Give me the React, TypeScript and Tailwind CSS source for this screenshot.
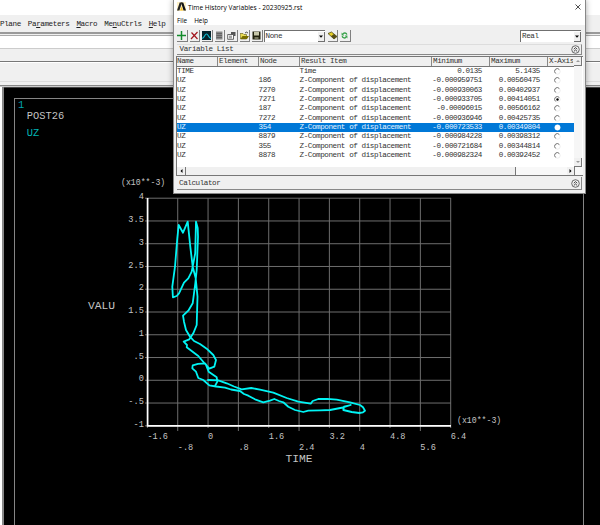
import { ReactNode } from "react";

const rows = [
  { name: "TIME", node: "", item: "Time", min: "0.0135", max: "5.1435" },
  { name: "UZ", node: "186", item: "Z-Component of displacement", min: "-0.000959751", max: "0.00560475" },
  { name: "UZ", node: "7270", item: "Z-Component of displacement", min: "-0.000930063", max: "0.00402937" },
  { name: "UZ", node: "7271", item: "Z-Component of displacement", min: "-0.000933705", max: "0.00414051" },
  { name: "UZ", node: "187", item: "Z-Component of displacement", min: "-0.00096015", max: "0.00566162" },
  { name: "UZ", node: "7272", item: "Z-Component of displacement", min: "-0.000936946", max: "0.00425735" },
  { name: "UZ", node: "354", item: "Z-Component of displacement", min: "-0.000723533", max: "0.00349804" },
  { name: "UZ", node: "8879", item: "Z-Component of displacement", min: "-0.000984228", max: "0.00398312" },
  { name: "UZ", node: "355", item: "Z-Component of displacement", min: "-0.000721684", max: "0.00344814" },
  { name: "UZ", node: "8878", item: "Z-Component of displacement", min: "-0.000982324", max: "0.00392452" },
];

const selectedRow = 6;
const xAxisRow = 3;

const yLabels = ["4", "3.5", "3", "2.5", "2", "1.5", "1", ".5", "0", "-.5", "-1"];
const xLabels = ["-1.6", "-.8", "0", ".8", "1.6", "2.4", "3.2", "4", "4.8", "5.6", "6.4"];

const curve =
  "M207.3 380 L218.3 380.3 226.7 383.3 234 386.5 241.7 389.3 251.2 388 260 389.7 273.3 392.7 286.7 398 298.3 401.7 310.7 403.7 312.7 401 318.3 399 327 398.8 336.7 399.7 350 402.3 360 405 363 407.3 365 410.7 363 412.3 359.3 413 351.7 412 343.3 410 344 406.7 350.7 405 343 407.5 330 410 320 410.3 308.3 410.7 303.3 412 295 410 288.3 406.7 283.3 402.3 279 401 274.3 399 270 400.7 263.3 402.3 255 399.3 248.3 395.7 244 394 240 391 231 389.5 225 387.7 216 386.5 209.3 385.3 203.3 380 198.3 378 196 371.7 192.3 368.3 192.7 365.3 198 363.8 205 363.3 209.3 368.7 214.3 366.7 216 360 213.3 355 206.7 348.7 200 344 194 341 190 336.7 186 330 184 321.7 183 315.7 188.3 310.7 192.7 303.3 194 293.3 195.3 283.3 196.7 270 198 236.7 197.7 228 196 221.7 195.2 253.3 193.3 263.3 191.7 271.7 188.3 278.3 184 282.7 179 293.3 176.7 296 172.9 297.3 172.3 286.7 175 266.7 177.3 238.3 178.7 225 183 232.7 187.7 221.7 190.3 246.7 192.7 266.7 195.7 278.3 197.5 296.7 196.7 325 193.3 333.3 189.3 339.3 183.7 341.7 187 345 186.7 347.3 198.3 356 206 365 208.7 371.7 216.7 377.3 217.3 381.7 215 386";

function ToolButton({ children }: { children: ReactNode }) {
  return (
    <div className="flex h-[12px] w-[10.5px] items-center justify-center border-r border-b border-[#808080] bg-[#f0f0f0]">
      <svg width="9" height="9" viewBox="0 0 9 9">
        {children}
      </svg>
    </div>
  );
}

function Chevrons() {
  return (
    <svg width="9" height="9" viewBox="0 0 9 9" fill="none" stroke="#333" strokeWidth="0.7">
      <circle cx="4.5" cy="4.5" r="3.8" />
      <path d="M2.8 4.2 4.5 2.6 6.2 4.2M2.8 6.5 4.5 4.9 6.2 6.5" strokeWidth="0.9" />
    </svg>
  );
}

function Select({ value, className }: { value: string; className: string }) {
  return (
    <div className={`flex h-[12px] items-center justify-between border-t border-l border-[#707070] bg-white pl-[1px] ${className}`}>
      <span className="pt-[1px]">{value}</span>
      <span className="flex h-[10px] w-[7px] items-center justify-center border-r border-b border-[#707070] bg-[#f0f0f0]">
        <svg width="4" height="3" viewBox="0 0 4 3"><path d="M0 .5H4L2 2.7Z" /></svg>
      </span>
    </div>
  );
}

function Radio({ checked, selected }: { checked: boolean; selected: boolean }) {
  return (
    <svg width="7" height="7" viewBox="0 0 7 7">
      <circle cx="3.5" cy="3.5" r="2.7" fill="white" stroke={selected ? "white" : "#ddd"} strokeWidth="0.5" />
      {!selected && <path d="M5.3 1.5A2.7 2.7 0 1 0 1.6 5.4" fill="none" stroke="#555" strokeWidth="0.8" />}
      {checked && <circle cx="3.5" cy="3.5" r="1.2" />}
    </svg>
  );
}

function VariableTable() {
  return (
    <div className="flex h-[120px] flex-col border-t border-b border-l border-[#777] bg-white">
      <div className="flex h-[110px]">
        <div className="w-[397px] overflow-hidden whitespace-pre">
          <div className="flex h-[10px] items-center border-b border-[#777] bg-[#f0f0f0] leading-[9px]">
            <div className="w-[40px]">Name</div>
            <div className="w-[41px] border-l border-[#888] pl-[1px]">Element</div>
            <div className="w-[41px] border-l border-[#888] pl-[1px]">Node</div>
            <div className="w-[132px] border-l border-[#888] pl-[1px]">Result Item</div>
            <div className="w-[58px] border-l border-[#888] pl-[1px]">Minimum</div>
            <div className="w-[58px] border-l border-[#888] pl-[1px]">Maximum</div>
            <div className="w-[26px] overflow-hidden border-l border-[#888] pl-[1px]">X-Axis</div>
          </div>
          {rows.map((row, i) => (
            <div
              key={i}
              className={`flex h-[9.3px] items-center leading-[9px] ${i === selectedRow ? "bg-[#0078d7] text-[#e4f2ff]" : ""}`}
            >
              <div className="w-[81.5px]">{row.name}</div>
              <div className="w-[41px]">{row.node}</div>
              <div className="w-[121px]">{row.item}</div>
              <div className="w-[61.5px] text-right">{row.min}</div>
              <div className="w-[58px] text-right">{row.max}</div>
              <div className="flex w-[34px] justify-center">
                <Radio checked={i === xAxisRow} selected={i === selectedRow} />
              </div>
            </div>
          ))}
        </div>
        <div className="flex w-[8px] flex-col justify-between bg-[#f6f6f6]">
          <div className="flex h-[9px] items-center justify-center border-r border-b border-[#777] bg-[#f0f0f0]">
            <svg width="4" height="2"><path d="M0 2 2 0 4 2" fill="#999" /></svg>
          </div>
          <div className="flex h-[9px] items-center justify-center border-r border-b border-[#777] bg-[#f0f0f0]">
            <svg width="4" height="2"><path d="M0 0 2 2 4 0" fill="#999" /></svg>
          </div>
        </div>
      </div>
      <div className="flex h-[8px] justify-between bg-[#f8f8f8] pr-[8px]">
        <div className="flex">
          <div className="flex w-[9px] items-center justify-center border-r border-[#777] bg-[#f0f0f0]">
            <svg width="3" height="4"><path d="M2.5 0 .5 2 2.5 4" /></svg>
          </div>
          <div className="w-[330px] border-r border-[#777] bg-[#f0f0f0]" />
        </div>
        <div className="flex w-[8px] items-center justify-center border-r border-[#777] bg-[#f0f0f0]">
          <svg width="3" height="4"><path d="M.5 0 2.5 2 .5 4" /></svg>
        </div>
      </div>
    </div>
  );
}

function VariablesDialog() {
  return (
    <div className="absolute top-0 left-[173px] h-[194px] w-[413px] border-x border-b border-[#888] bg-[#f0f0f0] font-['Liberation_Mono',monospace] text-[7.6px] tracking-[-0.42px] text-[#333] shadow-[0_0_6px_rgba(0,0,0,0.35)]">
      <div className="h-[25px] bg-white pl-[3px] font-['Open_Sans',sans-serif] text-[6.6px] tracking-normal text-black">
        <div className="flex h-[14px] items-center justify-between pr-[4px]">
          <div className="flex items-center gap-[2px]">
            <svg width="9" height="9" viewBox="0 0 9 9">
              <rect width="9" height="9" fill="#fff2c9" />
              <path d="M0 8.5 2.7.5H5L2.4 8.5Z" fill="#222" />
              <path d="M4 .5H6.2L9 8.5H6.5Z" fill="#111" />
              <path d="M3.1 8.5 4.6 4.3 6 8.5Z" fill="#f6be25" />
            </svg>
            <span className="pt-[1px]">Time History Variables - 20230925.rst</span>
          </div>
          <svg width="6" height="6" viewBox="0 0 6 6"><path d="M.5.5 5.5 5.5M5.5.5.5 5.5" stroke="#222" strokeWidth="0.8" /></svg>
        </div>
        <div className="flex h-[12px] items-center gap-[7px] pt-[1px] text-[6.4px]">
          <span>File</span>
          <span>Help</span>
        </div>
      </div>

      <div className="flex h-[19px] items-center justify-between pt-[3px] pr-[4px] pl-[3px]">
        <div className="flex items-center">
          <div className="flex gap-[2px]">
            <ToolButton>
              <path d="M4.5 0V9M0 4.5H9" stroke="#148b2c" strokeWidth="1.5" />
            </ToolButton>
            <ToolButton>
              <path d="M1.5 1.5 7.5 8M7.5 1 1 8" stroke="#a31820" strokeWidth="1.2" />
            </ToolButton>
            <ToolButton>
              <rect width="9" height="9" fill="#06232b" />
              <path d="M0 7.5C3 6.5 2.5 3 4.5 3S6 6.5 9 7.5" stroke="#12bdd0" strokeWidth="1.1" fill="none" />
            </ToolButton>
            <ToolButton>
              <rect x="1" y=".5" width="6.5" height="8" fill="#888" />
              <path d="M1.5 2.5H7M1.5 4.5H7M1.5 6.5H7" stroke="#555" strokeWidth="0.7" />
            </ToolButton>
            <ToolButton>
              <path d="M.7 3.5H6.5V8.3H.7Z" fill="white" stroke="#444" strokeWidth="0.8" />
              <path d="M4 1H8.5V5H6.5V3.5H4Z" fill="#555" />
              <path d="M2 5.2H5M2 6.8H5" stroke="#444" strokeWidth="0.7" />
            </ToolButton>
            <ToolButton>
              <path d="M0 2.5H3L4 3.5H6.5V8H.5Z" fill="#e9dc55" stroke="#5d5516" strokeWidth="0.6" />
              <path d="M.5 8 2.5 5H9L7 8Z" fill="#776d00" />
              <path d="M5 2Q7 0 8 2.2" fill="none" stroke="#222" strokeWidth="0.8" />
            </ToolButton>
            <ToolButton>
              <rect x=".5" y=".5" width="8" height="8" fill="#20200c" />
              <rect x="2" y=".8" width="5" height="3.7" fill="#c6c6a8" />
              <rect x="2.5" y="6" width="4" height="2" fill="#77775c" />
            </ToolButton>
          </div>
          <Select value="None" className="ml-[1px] w-[61px]" />
          <div className="ml-[3px] flex gap-[2px]">
            <ToolButton>
              <path d="M0 2.5 3.5 1 9 5.5 6 8Z" fill="#e3cd25" stroke="#39380c" strokeWidth="0.7" />
              <path d="M3 5.2 6 3 9 5.5 6 8Z" fill="#554d19" />
            </ToolButton>
            <ToolButton>
              <path d="M6.8 3.6C6.6 1.8 3.6 1.2 2.8 3.2M2.2 5.2C2.4 7 5.4 7.8 6.2 5.8" fill="none" stroke="#3ba34d" strokeWidth="1.4" />
              <path d="M1.6 1.4V4.4H4.2ZM7.4 7.6V4.6H4.8Z" fill="#3ba34d" />
            </ToolButton>
          </div>
        </div>
        <Select value="Real" className="w-[61px]" />
      </div>

      <div className="mx-[3px] flex h-[10.5px] items-center justify-between border-r border-b border-[#888] border-t border-t-[#ddd] pr-[1px] pl-[2.5px]">
        <span>Variable List</span>
        <Chevrons />
      </div>
      <div className="mx-[2px] pt-[1.5px]">
        <VariableTable />
      </div>
      <div className="mx-[3px] mt-[1px] flex h-[13px] items-center justify-between border-r border-b border-[#888] pr-[1px] pl-[2px]">
        <span className="pt-[1px]">Calculator</span>
        <Chevrons />
      </div>
    </div>
  );
}

function Chart() {
  return (
    <svg
      className="block font-['Liberation_Mono',monospace]"
      width="568"
      height="426"
      viewBox="15 99 568 426"
      fill="#c4c4c4"
      fontSize="8.6"
    >
      <text x="18" y="108" fontSize="10.4" fill="#00a5b0">1</text>
      <text x="26.8" y="118.7" fontSize="10.4">POST26</text>
      <text x="26.8" y="135.7" fontSize="10.4" fill="#00b4b4">UZ</text>
      <text x="121" y="185" fontSize="8.2">(x10**-3)</text>
      <text x="457" y="423" fontSize="8.2">(x10**-3)</text>
      <text x="88" y="309" fontSize="11.3">VALU</text>
      <text x="285.5" y="461.5" fontSize="11.3">TIME</text>

      {yLabels.map((label, i) => (
        <g key={label}>
          <path d={`M145 ${198.2 + i * 22.76}H451`} stroke="#6e6e6e" />
          <text x="143.8" y={199.3 + i * 22.76} textAnchor="end">{label}</text>
        </g>
      ))}
      {xLabels.map((label, i) => (
        <g key={label}>
          <path d={`M${147.4 + i * 30.33} 198V${i % 2 ? 431 : 428}`} stroke="#6e6e6e" />
          <text x={147.4 + i * 30.33} y={i % 2 ? 449.5 : 439}>{label}</text>
        </g>
      ))}

      <path d="M147.6 198V425.8H451" fill="none" stroke="white" strokeWidth="1.7" />
      <path d={curve} fill="none" stroke="#00f4f4" strokeWidth="1.8" strokeLinejoin="round" />
    </svg>
  );
}

export default function App() {
  return (
    <div className="relative flex h-[525px] w-[600px] flex-col overflow-hidden bg-[#f0f0f0]">
      <div className="h-[15px] bg-white" />
      <div className="flex h-[19px] items-center gap-[7px] border-b-2 border-[#9a9a9a] pt-[3px] font-['Liberation_Mono',monospace] text-[7.6px] tracking-[-0.4px] text-[#222]">
        <span>Plane</span>
        <span>Pa<u>r</u>ameters</span>
        <span><u>M</u>acro</span>
        <span>Me<u>n</u>uCtrls</span>
        <span><u>H</u>elp</span>
      </div>
      <div className="mt-[1px] h-[14px] border-t border-b border-t-[#aaa] border-b-[#ccc] bg-white" />
      <div className="h-[13px] border-b border-[#777]" />
      <div className="h-[20px] border-t border-b border-t-white border-b-[#ddd]" />
      <div className="h-[4px] border-b border-[#888]" />
      <div className="flex h-[439px] border-t border-[#ccc]">
        <div className="w-[2px] bg-white" />
        <div className="w-[2px] bg-[#888]" />
        <div className="flex-1 border-t border-[#444] bg-black pt-[10px] pl-[10px]">
          <div className="w-[570px] border border-b-0 border-[#858585]">
            <Chart />
          </div>
        </div>
      </div>
      <VariablesDialog />
    </div>
  );
}
